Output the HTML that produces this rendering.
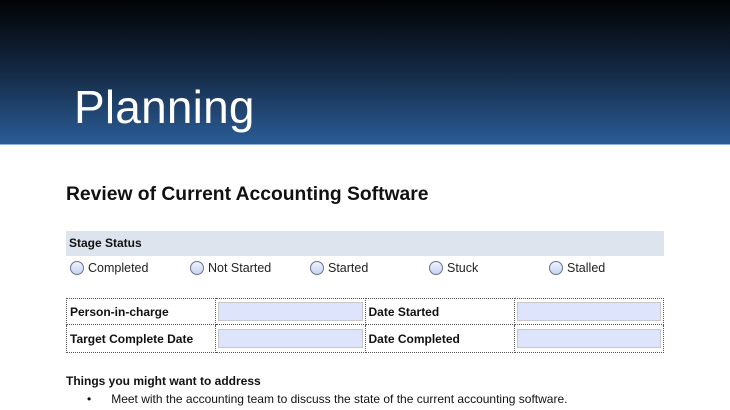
<!DOCTYPE html>
<html><head><style>
body{margin:0;width:730px;height:410px;overflow:hidden;background:#fff;font-family:"Liberation Sans",sans-serif;position:relative}
.hdr{position:absolute;left:0;top:0;width:730px;height:144px;background:linear-gradient(#020305 0%,#13253d 45%,#2a5c96 100%);border-bottom:1px solid #8fb0d8}
.hdr div{position:absolute;left:74px;top:80px;font-size:46px;color:#fff;letter-spacing:0.2px}
.t{position:absolute;left:66px;top:184px;font-size:19.3px;font-weight:bold;color:#111}
.ss{position:absolute;left:66px;top:231px;width:598px;height:25px;background:#dde4ee;font-size:12px;font-weight:bold;line-height:25px;text-indent:3px;color:#111}
.r{position:absolute;top:261px;font-size:12.5px;color:#222;display:flex;align-items:center}
.r i{display:inline-block;width:12px;height:12px;border:1px solid #6a7390;border-radius:50%;background:linear-gradient(#eef2ff,#c9d3f0);margin-right:4px}
table{position:absolute;left:66px;top:298px;border-collapse:collapse;width:598px}
td{border:1px dotted #555;height:25px;box-sizing:border-box;font-size:12px;font-weight:bold;padding:0 3px;color:#111;width:149px}
td.f{padding:2px}
td.f span{display:block;height:17px;background:#dde4fb;border:1px solid #c8c8c8}
.h{position:absolute;left:66px;top:374px;font-size:12px;font-weight:bold;color:#111}
.b{position:absolute;left:87px;top:392px;font-size:12px;color:#111}
</style></head><body>
<div class="hdr"><div>Planning</div></div>
<div class="t">Review of Current Accounting Software</div>
<div class="ss">Stage Status</div>
<div class="r" style="left:70px"><i></i>Completed</div>
<div class="r" style="left:190px"><i></i>Not Started</div>
<div class="r" style="left:310px"><i></i>Started</div>
<div class="r" style="left:429px"><i></i>Stuck</div>
<div class="r" style="left:549px"><i></i>Stalled</div>
<table>
<tr style="height:26px"><td>Person-in-charge</td><td class="f"><span></span></td><td>Date Started</td><td class="f"><span></span></td></tr>
<tr style="height:28px"><td>Target Complete Date</td><td class="f"><span></span></td><td>Date Completed</td><td class="f"><span></span></td></tr>
</table>
<div class="h">Things you might want to address</div>
<div class="b">•&nbsp;&nbsp;&nbsp;&nbsp;&nbsp;&nbsp;Meet with the accounting team to discuss the state of the current accounting software.</div>
</body></html>
